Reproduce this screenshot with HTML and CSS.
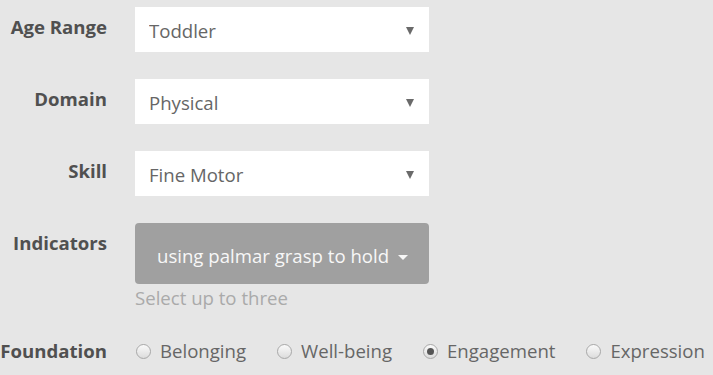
FILE: index.html
```html
<!DOCTYPE html>
<html lang="en">
<head>
  <meta charset="UTF-8">
  <title>Learning Outcomes</title>
  <link rel="stylesheet" href="styles.css">
</head>
<body>
  <form class="outcome-form">
    <div class="form-row">
      <label class="row-label" for="age">Age Range</label>
      <span class="select-wrap">
        <select id="age">
          <option>Toddler</option>
          <option>Infant</option>
          <option>Preschool</option>
        </select>
      </span>
    </div>

    <div class="form-row">
      <label class="row-label" for="domain">Domain</label>
      <span class="select-wrap">
        <select id="domain">
          <option>Physical</option>
          <option>Cognitive</option>
        </select>
      </span>
    </div>

    <div class="form-row">
      <label class="row-label" for="skill">Skill</label>
      <span class="select-wrap">
        <select id="skill">
          <option>Fine Motor</option>
          <option>Gross Motor</option>
        </select>
      </span>
    </div>

    <div class="form-row indicators-row">
      <span class="row-label">Indicators</span>
      <div class="indicators">
        <button type="button" class="multi-btn">using palmar grasp to hold <span class="caret"></span></button>
        <span class="help">Select up to three</span>
      </div>
    </div>

    <div class="form-row foundation-row">
      <span class="row-label">Foundation</span>
      <div class="radios">
        <label class="radio"><input type="radio" name="foundation"> Belonging</label>
        <label class="radio"><input type="radio" name="foundation"> Well-being</label>
        <label class="radio"><input type="radio" name="foundation" checked> Engagement</label>
        <label class="radio"><input type="radio" name="foundation"> Expression</label>
      </div>
    </div>
  </form>
</body>
</html>
```

FILE: styles.css
```css
body {
  margin: 0;
  background: #e6e6e6;
  font-family: "Open Sans", sans-serif;
  font-size: 18.6px;
  color: #666;
}

.outcome-form {
  padding-top: 7px;
}

.form-row {
  display: grid;
  grid-template-columns: 107px 294px;
  column-gap: 28px;
  align-items: start;
  margin-bottom: 27px;
}

.row-label {
  font-weight: 700;
  color: #505050;
  text-align: right;
  white-space: nowrap;
  padding-top: 7px;
}

.select-wrap {
  position: relative;
  display: block;
}

.select-wrap::after {
  content: "";
  position: absolute;
  right: 15px;
  top: 20px;
  border-left: 4px solid transparent;
  border-right: 4px solid transparent;
  border-top: 8px solid #6a6a6a;
  pointer-events: none;
}

select {
  appearance: none;
  -webkit-appearance: none;
  display: block;
  width: 100%;
  height: 45px;
  border: 0;
  border-radius: 0;
  background: #fff;
  padding: 2px 14px 0;
  font-family: inherit;
  font-size: 18.6px;
  color: #666;
}

.indicators-row {
  margin-bottom: 0;
}

.indicators {
  display: flex;
  flex-direction: column;
}

.multi-btn {
  height: 61px;
  border: 0;
  border-radius: 4px;
  background: #a0a0a0;
  color: #f7f7f7;
  font-family: inherit;
  font-size: 18.6px;
  text-align: left;
  padding: 3px 0 0 22px;
}

.caret {
  display: inline-block;
  margin-left: 4px;
  vertical-align: middle;
  border-left: 5px solid transparent;
  border-right: 5px solid transparent;
  border-top: 5px solid #f7f7f7;
}

.help {
  color: #aaa;
  font-size: 18.6px;
  line-height: 1.2;
  margin-top: 3px;
}

.foundation-row {
  grid-template-columns: 107px auto;
  margin-top: 29px;
  margin-bottom: 0;
}

.foundation-row .row-label {
  padding-top: 0;
}

.radios {
  display: flex;
  gap: 30px;
  white-space: nowrap;
}

.radio {
  display: flex;
  align-items: center;
  gap: 9px;
}

.radio input {
  appearance: none;
  -webkit-appearance: none;
  margin: 2px 0 0 1px;
  width: 15px;
  height: 15px;
  border: 1px solid #a8a8a8;
  border-radius: 50%;
  background: linear-gradient(#fafafa, #dcdcdc);
  position: relative;
}

.radio input:checked::after {
  content: "";
  position: absolute;
  left: 3px;
  top: 3px;
  width: 7px;
  height: 7px;
  border-radius: 50%;
  background: #555;
}
```
